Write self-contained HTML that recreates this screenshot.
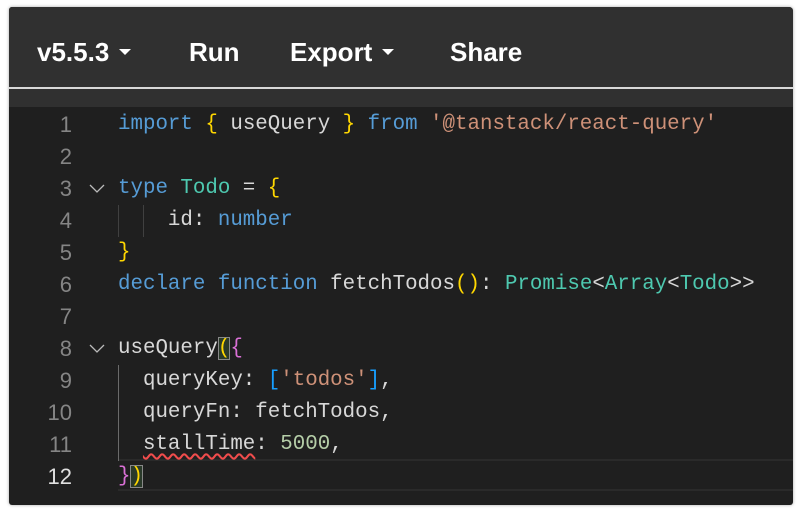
<!DOCTYPE html>
<html><head><meta charset="utf-8"><style>
html,body{margin:0;padding:0;background:#fff;width:800px;height:513px;overflow:hidden}
.panel{position:absolute;left:9px;top:7px;width:784px;height:498px;background:#1f1f1f;border-radius:3px 4px 3px 3px;overflow:hidden;box-shadow:0 0 3px rgba(0,0,0,.35)}
.hdr{position:absolute;left:0;top:0;width:784px;height:80px;background:#303030;font-family:"Liberation Sans",sans-serif;font-weight:bold;font-size:26px;color:#fff}
.hdr span{position:absolute;top:30px;line-height:30px}
.caret{display:inline-block;width:0;height:0;border-left:6px solid transparent;border-right:6px solid transparent;border-top:6px solid #fff;vertical-align:middle;margin-left:10px;position:relative;top:-2px}
.sep{position:absolute;left:0;top:80px;width:784px;height:2px;background:#d8d8d8}
.strip{position:absolute;left:0;top:82px;width:784px;height:18px;background:#303030}
.code{position:absolute;left:0;top:102px;width:784px;font-family:"Liberation Mono",monospace;font-size:20.8px;color:#d8d8d8}
.ln{position:absolute;height:32px;line-height:32px;white-space:pre}
.num{position:absolute;right:721px;width:60px;text-align:right;color:#858585;height:32px;line-height:32px;font-family:"Liberation Sans",sans-serif;font-size:22px}
.k{color:#569cd6}.t{color:#4ec9b0}.s{color:#ce9178}.y{color:#ffd700}.p{color:#da70d6}.b{color:#179fff}.n{color:#b5cea8}.f{color:#dcdcaa}
.g{position:absolute;width:1px;background:#404040}
.fold{position:absolute;left:79px;width:18px;height:18px}
</style></head><body>
<div class="panel">
 <div class="hdr">
  <span style="left:28px">v5.5.3<i class="caret"></i></span>
  <span style="left:180px">Run</span>
  <span style="left:281px">Export<i class="caret"></i></span>
  <span style="left:441px">Share</span>
 </div>
 <div class="sep"></div>
 <div class="strip"></div>
 <div class="code">
  <div style="position:absolute;left:109px;top:350px;width:675px;height:28px;border-top:2px solid #2a2a2a;border-bottom:2px solid #2a2a2a"></div>
  <div class="g" style="left:109px;top:96px;height:32px"></div>
  <div class="g" style="left:134px;top:96px;height:32px"></div>
  <div class="g" style="left:109px;top:256px;height:96px;background:#6a6a6a"></div>
  <svg class="fold" style="top:70px" viewBox="0 0 18 18"><path d="M2 6 L9 13 L16 6" fill="none" stroke="#bbb" stroke-width="1.3"/></svg>
  <svg class="fold" style="top:230px" viewBox="0 0 18 18"><path d="M2 6 L9 13 L16 6" fill="none" stroke="#bbb" stroke-width="1.3"/></svg>
  <div class="num" style="top:0">1</div>
  <div class="num" style="top:32px">2</div>
  <div class="num" style="top:64px">3</div>
  <div class="num" style="top:96px">4</div>
  <div class="num" style="top:128px">5</div>
  <div class="num" style="top:160px">6</div>
  <div class="num" style="top:192px">7</div>
  <div class="num" style="top:224px">8</div>
  <div class="num" style="top:256px">9</div>
  <div class="num" style="top:288px">10</div>
  <div class="num" style="top:320px">11</div>
  <div class="num" style="top:352px;color:#e0e0e0">12</div>
  <div class="ln" style="left:109px;top:0"><span class="k">import</span> <span class="y">{</span> useQuery <span class="y">}</span> <span class="k">from</span> <span class="s">'@tanstack/react-query'</span></div>
  <div class="ln" style="left:109px;top:64px"><span class="k">type</span> <span class="t">Todo</span> = <span class="y">{</span></div>
  <div class="ln" style="left:109px;top:96px">    id: <span class="k">number</span></div>
  <div class="ln" style="left:109px;top:128px"><span class="y">}</span></div>
  <div class="ln" style="left:109px;top:160px"><span class="k">declare</span> <span class="k">function</span> fetchTodos<span class="y">()</span>: <span class="t">Promise</span>&lt;<span class="t">Array</span>&lt;<span class="t">Todo</span>&gt;&gt;</div>
  <div class="ln" style="left:109px;top:224px">useQuery<span class="y" style="outline:1px solid #888;outline-offset:-1px;background:#2a3a2a">(</span><span class="p">{</span></div>
  <div class="ln" style="left:109px;top:256px">  queryKey: <span class="b">[</span><span class="s">'todos'</span><span class="b">]</span>,</div>
  <div class="ln" style="left:109px;top:288px">  queryFn: fetchTodos,</div>
  <div class="ln" style="left:109px;top:320px">  <span style="text-decoration:underline wavy #f14c4c;text-underline-offset:4px">stallTime</span>: <span class="n">5000</span>,</div>
  <div class="ln" style="left:109px;top:352px"><span class="p">}</span><span class="y" style="outline:1px solid #888;outline-offset:-1px;background:#2a3a2a">)</span></div>
 </div>
</div>
</body></html>
